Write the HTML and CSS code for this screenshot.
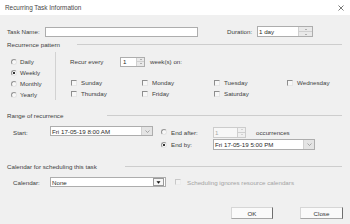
FILE: index.html
```html
<!DOCTYPE html>
<html>
<head>
<meta charset="utf-8">
<link rel="stylesheet" href="styles.css">
</head>
<body>
<div class="window">
  <div class="titlebar">
    <span class="title">Recurring Task Information</span>
    <svg class="close" width="6" height="6" viewBox="0 0 6 6"><path d="M0.5 0.5L5.5 5.5M5.5 0.5L0.5 5.5" stroke="#555" stroke-width="0.8" fill="none"/></svg>
  </div>
  <div class="content">
    <div class="task-row">
      <span class="lbl lbl-task">Task Name:</span>
      <div class="field field-task"></div>
      <span class="lbl lbl-dur">Duration:</span>
      <div class="field field-dur"><span class="val">1 day</span><span class="spin spin-dur"><i class="up"></i><i class="down"></i></span></div>
    </div>

    <div class="group-head head-1"><span class="head-text">Recurrence pattern</span><span class="rule"></span></div>
    <div class="pattern">
      <div class="freq">
        <div class="opt"><span class="radio"></span>Daily</div>
        <div class="opt"><span class="radio on"></span>Weekly</div>
        <div class="opt"><span class="radio"></span>Monthly</div>
        <div class="opt"><span class="radio"></span>Yearly</div>
      </div>
      <div class="weekly">
        <div class="recur-row">
          <span class="lbl lbl-recur">Recur every</span>
          <div class="field field-recur"><span class="val">1</span><span class="spin spin-recur"><i class="up"></i><i class="down"></i></span></div>
          <span class="lbl lbl-weeks">week(s) on:</span>
        </div>
        <div class="days">
          <div class="chk"><span class="box"></span>Sunday</div>
          <div class="chk"><span class="box"></span>Monday</div>
          <div class="chk"><span class="box"></span>Tuesday</div>
          <div class="chk"><span class="box"></span>Wednesday</div>
          <div class="chk"><span class="box"></span>Thursday</div>
          <div class="chk"><span class="box"></span>Friday</div>
          <div class="chk"><span class="box"></span>Saturday</div>
        </div>
      </div>
    </div>

    <div class="group-head head-2"><span class="head-text">Range of recurrence</span><span class="rule"></span></div>
    <div class="range">
      <span class="lbl lbl-start">Start:</span>
      <div class="field combo combo-start"><span class="val">Fri 17-05-19 8:00 AM</span><span class="combo-btn"><svg width="5" height="3" viewBox="0 0 5 3"><path d="M0.5 0.5L2.5 2.5L4.5 0.5" stroke="#8a8a8a" stroke-width="0.7" fill="none"/></svg></span></div>
      <div class="opt opt-range"><span class="radio"></span>End after:</div>
      <div class="after-cell">
        <div class="field field-after"><span class="val">1</span><span class="spin spin-after"><i class="up"></i><i class="down"></i></span></div>
        <span class="lbl lbl-occ">occurrences</span>
      </div>
      <span></span>
      <span></span>
      <div class="opt opt-range"><span class="radio on"></span>End by:</div>
      <div class="field combo combo-end"><span class="val">Fri 17-05-19 5:00 PM</span><span class="combo-btn"><svg width="5" height="3" viewBox="0 0 5 3"><path d="M0.5 0.5L2.5 2.5L4.5 0.5" stroke="#8a8a8a" stroke-width="0.7" fill="none"/></svg></span></div>
    </div>

    <div class="group-head head-3"><span class="head-text">Calendar for scheduling this task</span><span class="rule"></span></div>
    <div class="cal-row">
      <span class="lbl lbl-cal">Calendar:</span>
      <div class="field combo combo-cal"><span class="val">None</span><span class="combo-btn dark"><svg width="5" height="3" viewBox="0 0 5 3"><path d="M0.5 0.3L4.5 0.3L2.5 2.7Z" fill="#111"/></svg></span></div>
      <div class="chk chk-disabled"><span class="box"></span>Scheduling ignores resource calendars</div>
    </div>

    <div class="buttons">
      <div class="btn btn-ok">OK</div>
      <div class="btn btn-close">Close</div>
    </div>
  </div>
</div>
</body>
</html>
```

FILE: styles.css
```css
html, body {
  margin: 0;
  padding: 0;
}
body {
  width: 350px;
  height: 224px;
  overflow: hidden;
  background: #f0f0f0;
  font-family: "Liberation Sans", Arial, sans-serif;
  font-size: 6.2px;
  color: #404040;
}
.window {
  width: 350px;
  height: 224px;
  display: flex;
  flex-direction: column;
}
.titlebar {
  height: 15px;
  flex: none;
  background: #ffffff;
  display: flex;
  align-items: center;
  justify-content: space-between;
  padding: 0 6px 0 5px;
  box-sizing: border-box;
}
.title {
  font-size: 6.4px;
  color: #484848;
}
.close {
  display: block;
}
.content {
  padding: 0 8px 0 7px;
}
.lbl {
  white-space: nowrap;
}
.field {
  box-sizing: border-box;
  border: 1px solid #adadad;
  background: #ffffff;
  display: flex;
  align-items: center;
  color: #2a2a2a;
}
.val {
  flex: 1;
  padding-left: 1px;
  white-space: nowrap;
  overflow: hidden;
}

/* task row */
.task-row {
  margin-top: 11px;
  height: 11px;
  display: flex;
  align-items: center;
}
.lbl-task {
  width: 38px;
}
.field-task {
  width: 153px;
  height: 10px;
}
.lbl-dur {
  margin-left: 29px;
  width: 30px;
}
.field-dur {
  width: 56px;
  height: 11px;
}

/* spinners */
.spin {
  align-self: stretch;
  display: flex;
  flex-direction: column;
  background: #e9e9e9;
  border-left: 1px solid #cfcfcf;
}
.spin i {
  flex: 1;
  display: flex;
  align-items: center;
  justify-content: center;
}
.spin i.up {
  border-bottom: 1px solid #cfcfcf;
}
.spin i::before {
  content: "";
  width: 0;
  height: 0;
  border-left: 1.5px solid transparent;
  border-right: 1.5px solid transparent;
}
.spin i.up::before {
  border-bottom: 1.5px solid #777;
}
.spin i.down::before {
  border-top: 1.5px solid #777;
}
.spin-dur {
  width: 13px;
}
.spin-recur {
  width: 7px;
}
.spin-after {
  width: 7px;
  background: #f0f0f0;
}
.spin-after i::before {
  opacity: 0.5;
}

/* group headers */
.group-head {
  height: 8px;
  display: flex;
  align-items: center;
}
.head-text {
  white-space: nowrap;
  flex: none;
}
.rule {
  flex: 1;
  height: 0;
  border-top: 1px solid #cdcdcd;
}
.head-1 {
  margin-top: 3px;
}
.head-1 .head-text {
  width: 70px;
}
.head-2 {
  margin-top: 11px;
}
.head-2 .head-text {
  width: 100px;
}
.head-3 {
  margin-top: 12px;
}
.head-3 .head-text {
  width: 118px;
}

/* recurrence pattern */
.pattern {
  margin-top: 4px;
  height: 48px;
  display: flex;
}
.freq {
  width: 49px;
  box-sizing: border-box;
  padding: 4px 0 0 4px;
  border-right: 1px solid #d2d2d2;
}
.opt {
  height: 11px;
  display: flex;
  align-items: center;
  gap: 3px;
  white-space: nowrap;
}
.radio {
  width: 6px;
  height: 6px;
  box-sizing: border-box;
  border-radius: 50%;
  border: 1px solid;
  border-color: #959595 #e4e4e4 #e4e4e4 #959595;
  background: #f8f8f8;
  flex: none;
}
.radio.on {
  background: radial-gradient(circle, #333 0 1px, #f8f8f8 1.3px);
}
.weekly {
  padding: 4px 0 0 14px;
  flex: 1;
}
.recur-row {
  height: 11px;
  display: flex;
  align-items: center;
}
.lbl-recur {
  width: 50px;
}
.field-recur {
  width: 25px;
  height: 10px;
}
.field-recur .val {
  padding-left: 2px;
}
.lbl-weeks {
  margin-left: 5px;
}
.days {
  margin-top: 10px;
  margin-left: 1px;
  display: grid;
  grid-template-columns: 71px 72px 73px auto;
  grid-auto-rows: 11px;
}
.chk {
  display: flex;
  align-items: center;
  gap: 4px;
  white-space: nowrap;
}
.box {
  width: 6px;
  height: 6px;
  box-sizing: border-box;
  border: 1px solid;
  border-color: #8e8e8e #e6e6e6 #e6e6e6 #8e8e8e;
  background: #f7f7f7;
  flex: none;
}

/* range */
.range {
  margin-top: 7px;
  display: grid;
  grid-template-columns: 43px 103px 60px auto;
  grid-template-rows: 12px 11px;
  row-gap: 1px;
  align-items: center;
}
.lbl-start {
  padding-left: 6px;
}
.combo {
  padding: 0;
}
.combo-btn {
  align-self: stretch;
  width: 10px;
  display: flex;
  align-items: center;
  justify-content: center;
  background: #e4e4e4;
  border-left: 1px solid #d0d0d0;
}
.combo-btn svg {
  display: block;
}
.combo-btn.dark {
  width: 9px;
  background: #f6f6f6;
  border: 1px solid #9a9a9a;
  margin: 0 1px 0 0;
}
.combo-start {
  width: 103px;
  height: 10px;
  align-self: start;
}
.opt-range {
  padding-left: 8px;
  gap: 4px;
}
.after-cell {
  display: flex;
  align-items: center;
}
.field-after {
  width: 33px;
  height: 11px;
  border-color: #cccccc;
  color: #a8a8a8;
  background: #f7f7f7;
}
.lbl-occ {
  margin-left: 10px;
}
.combo-end {
  width: 102px;
  height: 11px;
}

/* calendar */
.cal-row {
  margin-top: 7px;
  height: 10px;
  display: flex;
  align-items: center;
}
.lbl-cal {
  width: 43px;
  box-sizing: border-box;
  padding-left: 6px;
}
.combo-cal {
  width: 116px;
  height: 10px;
}
.chk-disabled {
  margin-left: 9px;
  gap: 6px;
  color: #a3a3a3;
}
.chk-disabled .box {
  border-color: #c8c8c8 #ececec #ececec #c8c8c8;
  background: #f3f3f3;
}

/* buttons */
.buttons {
  margin-top: 20px;
  margin-right: -1px;
  display: flex;
  justify-content: flex-end;
  gap: 27px;
}
.btn {
  height: 12px;
  box-sizing: border-box;
  display: flex;
  align-items: center;
  justify-content: center;
  background: #fafafa;
  border: 1px solid #d6d6d6;
  border-right-color: #6e6e6e;
  border-bottom-color: #a6a6a6;
  color: #333;
}
.btn-ok {
  width: 42px;
}
.btn-close {
  width: 43px;
}
```
